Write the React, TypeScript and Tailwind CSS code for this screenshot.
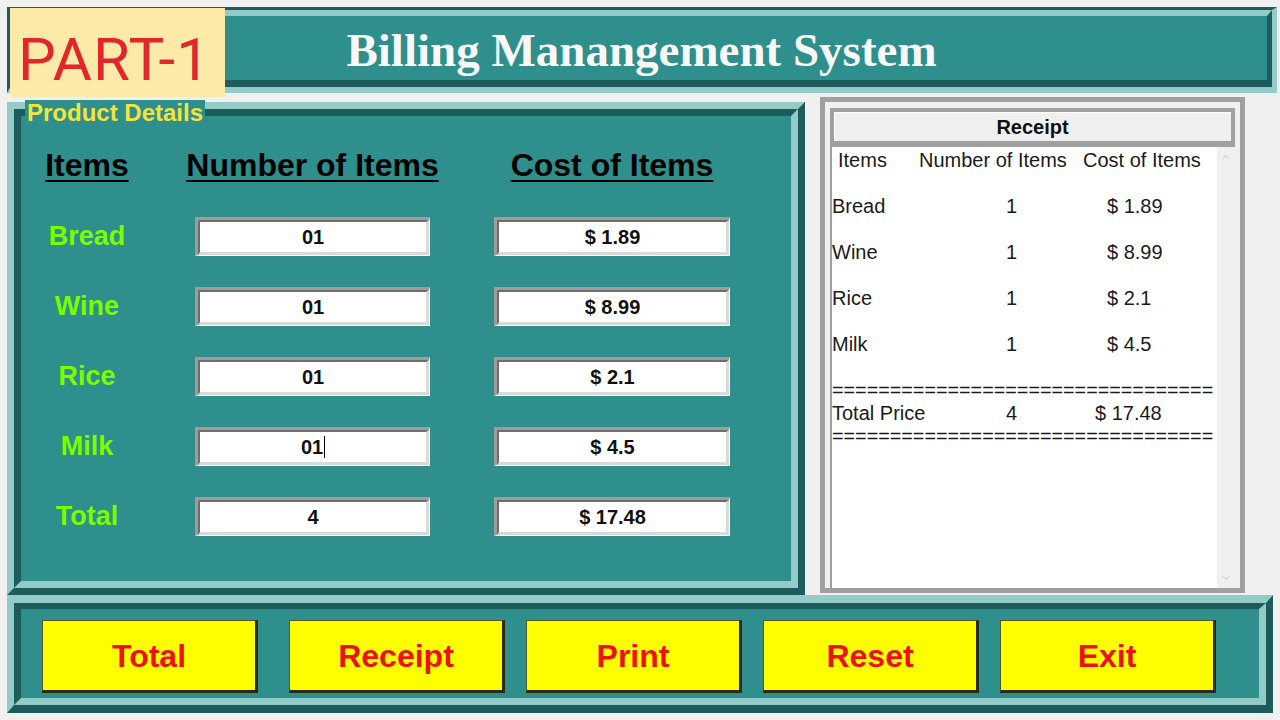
import { ChevronDown, ChevronUp } from "lucide-react";

const items = [
  { name: "Bread", qty: "01", cost: "$ 1.89" },
  { name: "Wine", qty: "01", cost: "$ 8.99" },
  { name: "Rice", qty: "01", cost: "$ 2.1" },
  { name: "Milk", qty: "01", cost: "$ 4.5", caret: true },
  { name: "Total", qty: "4", cost: "$ 17.48" },
];

const receiptRows = [
  { name: "Bread", qty: "1", cost: "$ 1.89" },
  { name: "Wine", qty: "1", cost: "$ 8.99" },
  { name: "Rice", qty: "1", cost: "$ 2.1" },
  { name: "Milk", qty: "1", cost: "$ 4.5" },
];

const buttons = [
  { label: "Total", cls: "ml-0" },
  { label: "Receipt", cls: "ml-[31px]" },
  { label: "Print", cls: "ml-[21px]" },
  { label: "Reset", cls: "ml-[21px]" },
  { label: "Exit", cls: "ml-[21px]" },
];

const EQ = "=================================";

const Entry = ({ value, caret }: { value: string; caret?: boolean }) => (
  <div className="h-[39px] border-t-[3px] border-l-[3px] border-b-[1px] border-r-[1px] border-t-[#9d9d9d] border-l-[#9d9d9d] border-b-white border-r-white">
    <div className="h-full border-t-[2px] border-l-[2px] border-b-[3px] border-r-[3px] border-t-[#6e6e6e] border-l-[#6e6e6e] border-b-[#dadada] border-r-[#dadada] bg-white flex items-center justify-center">
      <span className="text-[20px] font-bold text-[#111]">{value}</span>
      {caret && <span className="ml-[1px] w-[1px] h-[22px] bg-black" />}
    </div>
  </div>
);

export default function App() {
  return (
    <div
      className="relative w-[1280px] h-[720px] bg-[#f0f0f0] overflow-hidden pt-[7px]"
      style={{ fontFamily: '"Liberation Sans", Arial, sans-serif' }}
    >
      {/* header */}
      <div className="ml-[7px] w-[1270px] h-[86px] border-t-[3px] border-l-[3px] border-r-[5px] border-b-[6px] border-t-[#1d5c5a] border-l-[#1d5c5a] border-r-[#93cbc8] border-b-[#93cbc8]">
        <div className="h-full border-t-[6px] border-l-[6px] border-r-[5px] border-b-[7px] border-t-[#93cbc8] border-l-[#93cbc8] border-r-[#1d5c5a] border-b-[#1d5c5a] bg-[#2e8f8c] flex items-center justify-center pt-[4px]">
          <h1
            className="text-[47px] font-bold text-[#f8f8f8] leading-none"
            style={{ fontFamily: '"Liberation Serif", "Times New Roman", serif' }}
          >
            Billing Manangement System
          </h1>
        </div>
      </div>

      {/* video overlay label */}
      <div className="absolute left-[10px] top-[8px] w-[215px] h-[89px] bg-[#fde9a8] flex items-center pl-[8px] pt-[14px]">
        <span
          className="text-[60px] text-[#e3262a] leading-none tracking-[1px]"
          style={{ fontFamily: "Roboto, sans-serif" }}
        >
          PART-1
        </span>
      </div>

      {/* middle */}
      <div className="flex mt-[4px] h-[498px]">
        {/* product details */}
        <div className="relative ml-[7px] w-[798px] pt-[5px]">
          <div className="h-[493px] border-[7px] border-t-[#93cbc8] border-l-[#93cbc8] border-b-[#1d5c5a] border-r-[#1d5c5a]">
            <div className="h-full border-[7px] border-t-[#1d5c5a] border-l-[#1d5c5a] border-b-[#93cbc8] border-r-[#93cbc8] bg-[#2e8f8c]">
              <div className="flex mt-[31px] h-[36px] items-center text-[32px] font-bold text-black">
                <div className="w-[132px] flex justify-center">
                  <span className="underline decoration-2 underline-offset-[4px]">Items</span>
                </div>
                <div className="ml-[42px] w-[235px] flex justify-center whitespace-nowrap">
                  <span className="shrink-0 underline decoration-2 underline-offset-[4px]">Number of Items</span>
                </div>
                <div className="ml-[64px] w-[236px] flex justify-center whitespace-nowrap">
                  <span className="shrink-0 underline decoration-2 underline-offset-[4px]">Cost of Items</span>
                </div>
              </div>
              <div className="flex flex-col gap-[31px] mt-[34px]">
                {items.map((it) => (
                  <div key={it.name} className="flex items-center h-[39px]">
                    <div className="w-[132px] text-center text-[27px] font-bold text-[#7cfc00]">{it.name}</div>
                    <div className="ml-[42px] w-[235px]">
                      <Entry value={it.qty} caret={it.caret} />
                    </div>
                    <div className="ml-[64px] w-[236px]">
                      <Entry value={it.cost} />
                    </div>
                  </div>
                ))}
              </div>
            </div>
          </div>
          <div className="absolute left-[18px] top-[3px] h-[26px] px-[2px] bg-[#2e8f8c] flex items-center">
            <span className="text-[24px] font-bold text-[#f3e43c] leading-none">Product Details</span>
          </div>
        </div>

        {/* receipt */}
        <div className="ml-[15px] w-[425px] h-[496px] border-[5px] border-[#a0a0a0] bg-[#f0f0f0] pt-[6px] px-[5px] flex flex-col">
          <div className="h-[37px] border-[4px] border-[#a0a0a0] bg-[#f0f0f0] flex items-center justify-center shadow-[inset_1px_1px_0_#fff]">
            <span className="text-[20px] font-bold text-[#111]">Receipt</span>
          </div>
          <div className="flex-1 flex border-t-[2px] border-l-[2px] border-[#a0a0a0] bg-white">
            <div className="flex-1 pt-[2px] text-[20px] leading-[23px] text-[#1a1a1a] whitespace-pre">
              <div className="flex h-[23px]">
                <span className="pl-[6px] w-[87px]">Items</span>
                <span className="w-[164px]">Number of Items</span>
                <span>Cost of Items</span>
              </div>
              <div className="h-[23px]" />
              {receiptRows.map((r) => (
                <div key={r.name}>
                  <div className="flex h-[23px]">
                    <span className="w-[174px]">{r.name}</span>
                    <span className="w-[101px]">{r.qty}</span>
                    <span>{r.cost}</span>
                  </div>
                  <div className="h-[23px]" />
                </div>
              ))}
              <div className="h-[23px] text-[19.8px]">{EQ}</div>
              <div className="flex h-[23px]">
                <span className="w-[174px]">Total Price</span>
                <span className="w-[89px]">4</span>
                <span>$ 17.48</span>
              </div>
              <div className="h-[23px] text-[19.8px]">{EQ}</div>
            </div>
            <div className="w-[18px] bg-[#f0f0f0] flex flex-col items-center justify-between py-[4px]">
              <ChevronUp className="w-[12px] h-[12px] text-[#b0b0b0]" strokeWidth={1.5} />
              <ChevronDown className="w-[12px] h-[12px] text-[#b0b0b0]" strokeWidth={1.5} />
            </div>
          </div>
        </div>
      </div>

      {/* buttons */}
      <div className="ml-[7px] w-[1266px] h-[118px] border-t-[8px] border-l-[7px] border-b-[8px] border-r-[7px] border-t-[#93cbc8] border-l-[#93cbc8] border-b-[#1d5c5a] border-r-[#1d5c5a]">
        <div className="h-full border-t-[6px] border-l-[7px] border-b-[7px] border-r-[7px] border-t-[#1d5c5a] border-l-[#1d5c5a] border-b-[#93cbc8] border-r-[#93cbc8] bg-[#2e8f8c] flex pt-[11px] pl-[21px]">
          {buttons.map((b) => (
            <div
              key={b.label}
              className={`${b.cls} w-[216px] h-[73px] bg-[#ffff00] border-t border-l border-[#5a5a20] border-b-[3px] border-r-[3px] border-b-[#2a2a10] border-r-[#2a2a10] flex items-center justify-center`}
            >
              <span className="text-[32px] font-bold text-[#ee1111]">{b.label}</span>
            </div>
          ))}
        </div>
      </div>
    </div>
  );
}
